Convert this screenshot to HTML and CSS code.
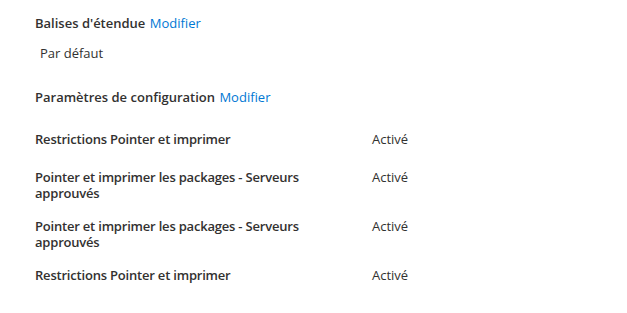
FILE: index.html
```html
<!DOCTYPE html>
<html lang="fr">
<head>
<meta charset="utf-8">
<title>Paramètres</title>
<link rel="stylesheet" href="styles.css">
</head>
<body>
<main class="page">
  <h2 class="section-title">Balises d'étendue <a class="link" href="#">Modifier</a></h2>
  <p class="value-text">Par défaut</p>
  <h2 class="section-title config">Paramètres de configuration <a class="link" href="#">Modifier</a></h2>
  <div class="settings">
    <div class="row first">
      <div class="label">Restrictions Pointer et imprimer</div>
      <div class="state">Activé</div>
    </div>
    <div class="row">
      <div class="label">Pointer et imprimer les packages - Serveurs approuvés</div>
      <div class="state">Activé</div>
    </div>
    <div class="row">
      <div class="label">Pointer et imprimer les packages - Serveurs approuvés</div>
      <div class="state">Activé</div>
    </div>
    <div class="row">
      <div class="label">Restrictions Pointer et imprimer</div>
      <div class="state">Activé</div>
    </div>
  </div>
</main>
</body>
</html>
```
FILE: styles.css
```css
html, body {
  margin: 0;
  padding: 0;
  background: #ffffff;
}
body {
  font-family: "Open Sans", "Noto Sans", "Liberation Sans", sans-serif;
  font-size: 13px;
  line-height: 16px;
  color: #323130;
}
.page {
  padding: 15px 0 0 35px;
}
.section-title {
  margin: 0;
  font-size: 13px;
  line-height: 16px;
  font-weight: 600;
  color: #323130;
}
.section-title .link {
  font-weight: 400;
  color: #0078d4;
  text-decoration: none;
  margin-left: 1px;
}
.value-text {
  margin: 14px 0 0 5px;
}
.section-title.config {
  margin-top: 28px;
}
.settings {
  display: flex;
  flex-direction: column;
  gap: 17px;
  margin-top: 26px;
}
.row {
  display: grid;
  grid-template-columns: 280px auto;
  column-gap: 57px;
}
.row.first {
  margin-bottom: 5px;
}
.label {
  font-weight: 600;
  letter-spacing: -0.2px;
}
```
